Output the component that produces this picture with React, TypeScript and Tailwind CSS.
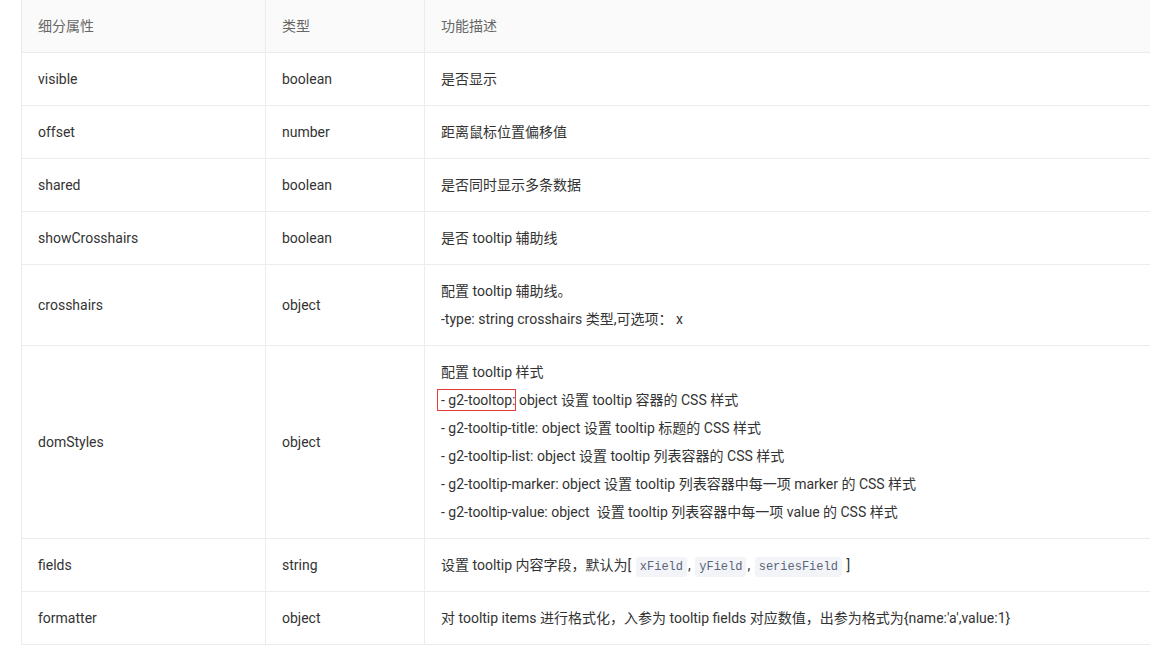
import React from "react";

const Code = ({ children }: { children: React.ReactNode }) => (
  <code className="mx-[1px] rounded-[3px] bg-[#f2f4f8] px-[4px] py-[3px] font-['Liberation_Mono',monospace] text-[12px] leading-[12px] text-[#5b6478]">
    {children}
  </code>
);

type Row = { name: string; type: string; desc: React.ReactNode[] };

const rows: Row[] = [
  { name: "visible", type: "boolean", desc: ["是否显示"] },
  { name: "offset", type: "number", desc: ["距离鼠标位置偏移值"] },
  { name: "shared", type: "boolean", desc: ["是否同时显示多条数据"] },
  { name: "showCrosshairs", type: "boolean", desc: ["是否 tooltip 辅助线"] },
  {
    name: "crosshairs",
    type: "object",
    desc: ["配置 tooltip 辅助线。", "-type: string crosshairs 类型,可选项： x"],
  },
  {
    name: "domStyles",
    type: "object",
    desc: [
      "配置 tooltip 样式",
      <>
        <span className="relative">
          - g2-tooltop:
          <span className="pointer-events-none absolute -left-[4px] -right-[1px] -top-[3px] -bottom-[3px] border border-[#e5393a]" />
        </span>
        {" "}object 设置 tooltip 容器的 CSS 样式
      </>,
      "- g2-tooltip-title: object 设置 tooltip 标题的 CSS 样式",
      "- g2-tooltip-list: object 设置 tooltip 列表容器的 CSS 样式",
      "- g2-tooltip-marker: object 设置 tooltip 列表容器中每一项 marker 的 CSS 样式",
      "- g2-tooltip-value: object \u00a0设置 tooltip 列表容器中每一项 value 的 CSS 样式",
    ],
  },
  {
    name: "fields",
    type: "string",
    desc: [
      <>
        设置 tooltip 内容字段，默认为[ <Code>xField</Code>, <Code>yField</Code>, <Code>seriesField</Code> ]
      </>,
    ],
  },
  {
    name: "formatter",
    type: "object",
    desc: ["对 tooltip items 进行格式化，入参为 tooltip fields 对应数值，出参为格式为{name:'a',value:1}"],
  },
];

export default function App() {
  return (
    <div className="h-[650px] w-[1150px] overflow-hidden bg-white font-['Roboto','Noto_Sans_CJK_SC',sans-serif] text-[14px]">
      <table className="ml-[21px] w-[1200px] table-fixed border-collapse">
        <colgroup>
          <col className="w-[244px]" />
          <col className="w-[159px]" />
          <col />
        </colgroup>
        <thead>
          <tr className="bg-[#fafafa] text-[#666]">
            <th className="border-b border-l border-[#ececec] px-[16px] py-[15px] text-left font-normal leading-[22px]">细分属性</th>
            <th className="border-b border-l border-[#ececec] px-[16px] py-[15px] text-left font-normal leading-[22px]">类型</th>
            <th className="border-b border-l border-[#ececec] px-[16px] py-[15px] text-left font-normal leading-[22px]">功能描述</th>
          </tr>
        </thead>
        <tbody className="text-[#333]">
          {rows.map((r) => (
            <tr key={r.name}>
              <td className="border-b border-l border-[#ececec] px-[16px] py-[15px] align-middle leading-[22px]">{r.name}</td>
              <td className="border-b border-l border-[#ececec] px-[16px] py-[15px] align-middle leading-[22px]">{r.type}</td>
              <td className="border-b border-l border-[#ececec] px-[16px] py-[15px] align-middle leading-[22px]">
                <div className="flex flex-col gap-[6px]">
                  {r.desc.map((d, i) => (
                    <div key={i} className="h-[22px] whitespace-nowrap">{d}</div>
                  ))}
                </div>
              </td>
            </tr>
          ))}
        </tbody>
      </table>
    </div>
  );
}
